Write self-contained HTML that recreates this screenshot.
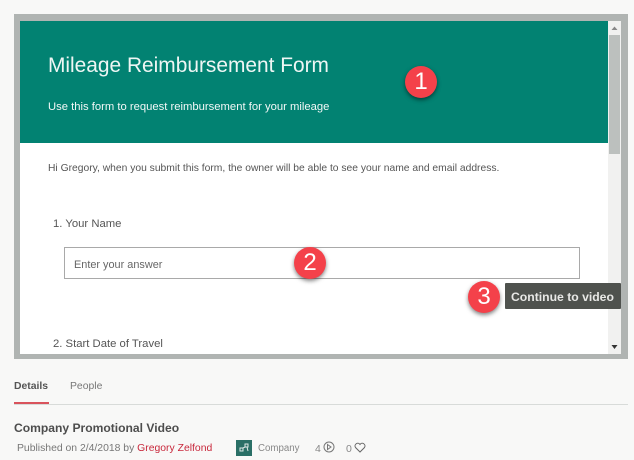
<!DOCTYPE html>
<html><head><meta charset="utf-8">
<style>
html,body{margin:0;padding:0;}
body{width:634px;height:460px;background:#f8f8f7;position:relative;overflow:hidden;font-family:"Liberation Sans",sans-serif;color:#555;}
.a{position:absolute;white-space:nowrap;}
.badge{position:absolute;width:32px;height:32px;border-radius:50%;background:#f4414a;color:#fff;font-size:24px;line-height:32px;text-align:center;box-shadow:0 2px 4px rgba(0,0,0,.5);}
</style></head><body>
<div class="a" style="left:14px;top:14px;width:614px;height:345px;background:#b0b4b2;"></div>
<div class="a" style="left:20px;top:21px;width:601px;height:333px;background:#fff;"></div>
<div class="a" style="left:20px;top:21px;width:588px;height:122px;background:#028272;"></div>
<div class="a" style="left:608px;top:21px;width:13px;height:333px;background:#f1f1f0;"></div>
<div class="a" style="left:609px;top:35px;width:11px;height:119px;background:#bcc0be;"></div>
<svg class="a" style="left:608px;top:21px" width="13" height="333"><path d="M3.500 9L6.500 5.500L9.500 9Z" fill="#888"/><path d="M3.500 324L9.500 324L6.500 328Z" fill="#333"/></svg>

<div class="a" style="left:48px;top:52px;font-size:20.900px;line-height:28px;color:#eef6f4;">Mileage Reimbursement Form</div>
<div class="a" style="left:48px;top:100px;font-size:11.250px;line-height:15px;color:#f2f8f7;">Use this form to request reimbursement for your mileage</div>
<div class="a" style="left:48px;top:161px;font-size:10.300px;line-height:15px;color:#555;">Hi Gregory, when you submit this form, the owner will be able to see your name and email address.</div>
<div class="a" style="left:53px;top:216px;font-size:11.300px;line-height:16px;color:#555;">1. Your Name</div>
<div class="a" style="left:64px;top:247px;width:514px;height:30px;border:1px solid #a9a9a9;background:#fff;"></div>
<div class="a" style="left:74px;top:258px;font-size:10.900px;line-height:15px;color:#666;">Enter your answer</div>
<div class="a" style="left:53px;top:336px;font-size:11.300px;line-height:16px;color:#555;">2. Start Date of Travel</div>

<div class="a" style="left:505px;top:283px;width:116px;height:26px;background:#4f524e;border-radius:1px;"></div>
<div class="a" style="left:511px;top:290px;font-size:12.200px;line-height:14px;font-weight:bold;color:#e8e8e6;">Continue to video</div>

<div class="badge" style="left:405px;top:66px;">1</div>
<div class="badge" style="left:294px;top:247px;">2</div>
<div class="badge" style="left:468px;top:281px;">3</div>

<div class="a" style="left:14px;top:380px;font-size:10.400px;line-height:14px;font-weight:bold;color:#555;">Details</div>
<div class="a" style="left:70px;top:380px;font-size:10.400px;line-height:14px;color:#777;">People</div>
<div class="a" style="left:14px;top:404px;width:614px;height:1px;background:#d8dbd9;"></div>
<div class="a" style="left:14px;top:402px;width:35px;height:2px;background:#d9535c;"></div>
<div class="a" style="left:14px;top:420px;font-size:12.100px;line-height:16px;font-weight:bold;color:#4d4d4d;">Company Promotional Video</div>
<div class="a" style="left:17px;top:442px;font-size:10.400px;line-height:14px;color:#777;">Published on 2/4/2018 by <span style="color:#c8283c;">Gregory Zelfond</span></div>

<div class="a" style="left:236px;top:440px;width:16px;height:16px;background:#2a6f66;"></div>
<svg class="a" style="left:236px;top:440px" width="16" height="16" fill="none" stroke="#dfe9e7" stroke-width="1"><rect x="4" y="8" width="3" height="3"/><rect x="9" y="4" width="3" height="3"/><path d="M7 8L9 7M11 7L12 11"/></svg>
<div class="a" style="left:258px;top:442px;font-size:9.700px;line-height:13px;color:#888;">Company</div>
<div class="a" style="left:315px;top:442px;font-size:10.500px;line-height:14px;color:#888;">4</div>
<svg class="a" style="left:323px;top:441px" width="12" height="12" fill="none" stroke="#777"><circle cx="6" cy="6" r="5"/><path d="M4.500 3.500L8 6L4.500 8.500Z"/></svg>
<div class="a" style="left:346px;top:442px;font-size:10.500px;line-height:14px;color:#888;">0</div>
<svg class="a" style="left:354px;top:442px" width="12" height="11" fill="none" stroke="#666"><path d="M6 10L1.500 5.500C-.5 2.500 4 -.5 6 2.500C8 -.5 12.500 2.500 10.500 5.500Z"/></svg>
</body></html>
